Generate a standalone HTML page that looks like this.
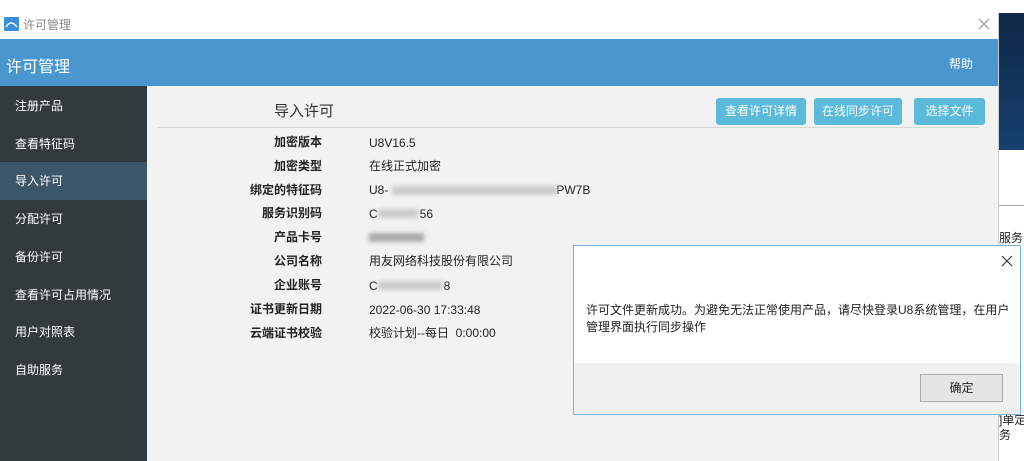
<!DOCTYPE html>
<html><head><meta charset="utf-8"><style>
*{margin:0;padding:0;box-sizing:border-box}
body{width:1024px;height:461px;overflow:hidden;position:relative;background:#fff;font-family:"Liberation Sans","Noto Sans CJK SC",sans-serif;font-size:12px;color:#222}
.a{position:absolute}
.side div{position:absolute;left:0;width:147px;height:38px;line-height:38px;padding-left:15px;color:#fff;font-size:12px}
.lbl{position:absolute;width:172px;text-align:right;left:150px;font-weight:bold;font-size:12px;color:#222;line-height:17px}
.val{position:absolute;left:369px;font-size:12px;color:#222;line-height:17px}
.btn{position:absolute;top:98px;height:27px;line-height:27px;background:#5bbad9;color:#fff;text-align:center;border-radius:3px;font-size:12px}
.blur{position:absolute;background:#ccc;filter:blur(2px);height:9px}
</style></head><body>
<div class="a" style="left:4px;top:17px;width:15px;height:14px;background:#3a8fd8;border-radius:1px"></div>
<svg class="a" style="left:5px;top:19px" width="13" height="10"><path d="M1 8 Q6 0 12 8" stroke="#fff" stroke-width="1.4" fill="none"/></svg>
<div class="a" style="left:23px;top:16px;font-size:12px;color:#888">许可管理</div>
<svg class="a" style="left:978px;top:18px" width="12" height="12"><path d="M1 1L11 11M11 1L1 11" stroke="#999" stroke-width="1.2"/></svg>
<div class="a" style="left:999px;top:13px;width:25px;height:137px;background:linear-gradient(#0f2748,#16406e)"></div>
<div class="a" style="left:999px;top:205px;width:25px;height:1px;background:#aaa"></div>
<div class="a" style="left:998px;top:13px;width:1px;height:448px;background:#ccc"></div>
<div class="a" style="left:999px;top:229px;font-size:12px">服务</div>
<div class="a" style="left:999px;top:411px;font-size:12px;white-space:nowrap">]单定</div>
<div class="a" style="left:999px;top:426px;font-size:12px">务</div>
<div class="a" style="left:0;top:39px;width:998px;height:47px;background:#4a97cf"></div>
<div class="a" style="left:6px;top:53px;color:#fff;font-size:16px">许可管理</div>
<div class="a" style="left:949px;top:55px;color:#fff;font-size:12px">帮助</div>
<div class="a side" style="left:0;top:86px;width:147px;height:375px;background:#323a3e">
<div style="top:1px">注册产品</div>
<div style="top:39px">查看特征码</div>
<div style="top:76px;background:#3b5669">导入许可</div>
<div style="top:114px">分配许可</div>
<div style="top:152px">备份许可</div>
<div style="top:190px">查看许可占用情况</div>
<div style="top:227px">用户对照表</div>
<div style="top:265px">自助服务</div>
</div>
<div class="a" style="left:147px;top:86px;width:851px;height:375px;background:#f2f2f2"></div>
<div class="a" style="left:274px;top:100px;font-size:15px;color:#333">导入许可</div>
<div class="a" style="left:157px;top:127px;width:822px;height:1px;background:#d8d8d8"></div>
<div class="btn" style="left:716px;width:90px">查看许可详情</div>
<div class="btn" style="left:814px;width:88px">在线同步许可</div>
<div class="btn" style="left:914px;width:71px">选择文件</div>
<div class="lbl" style="top:134px">加密版本</div><div class="val" style="top:135px">U8V16.5</div>
<div class="lbl" style="top:158px">加密类型</div><div class="val" style="top:158px">在线正式加密</div>
<div class="lbl" style="top:182px">绑定的特征码</div><div class="val" style="top:182px">U8-<span style="display:inline-block;width:168px"></span>PW7B</div>
<div class="blur" style="left:392px;top:186px;width:165px"></div>
<div class="lbl" style="top:205px">服务识别码</div><div class="val" style="top:206px">C<span style="display:inline-block;width:42px"></span>56</div>
<div class="blur" style="left:378px;top:209px;width:40px"></div>
<div class="lbl" style="top:229px">产品卡号</div><div class="blur" style="left:369px;top:233px;width:55px;background:#aaa"></div>
<div class="lbl" style="top:253px">公司名称</div><div class="val" style="top:253px">用友网络科技股份有限公司</div>
<div class="lbl" style="top:277px">企业账号</div><div class="val" style="top:278px">C<span style="display:inline-block;width:66px"></span>8</div>
<div class="blur" style="left:378px;top:281px;width:65px"></div>
<div class="lbl" style="top:301px">证书更新日期</div><div class="val" style="top:302px">2022-06-30 17:33:48</div>
<div class="lbl" style="top:325px">云端证书校验</div><div class="val" style="top:325px">校验计划--每日&nbsp; 0:00:00</div>
<div class="a" style="left:573px;top:245px;width:448px;height:170px;background:#fff;border:1px solid #7ab4dc">
<svg class="a" style="left:427px;top:9px" width="12" height="12"><path d="M1 1L11 11M11 1L1 11" stroke="#333" stroke-width="1.1"/></svg>
<div class="a" style="left:12px;top:56px;width:432px;font-size:12px;line-height:17px;color:#222">许可文件更新成功。为避免无法正常使用产品，请尽快登录U8系统管理，在用户<br>管理界面执行同步操作</div>
<div class="a" style="left:0;top:117px;width:446px;height:51px;background:#f0f0f0"></div>
<div class="a" style="left:346px;top:128px;width:83px;height:28px;border:1px solid #adadad;background:#e5e5e5;text-align:center;line-height:26px;font-size:12px">确定</div>
</div>
</body></html>
